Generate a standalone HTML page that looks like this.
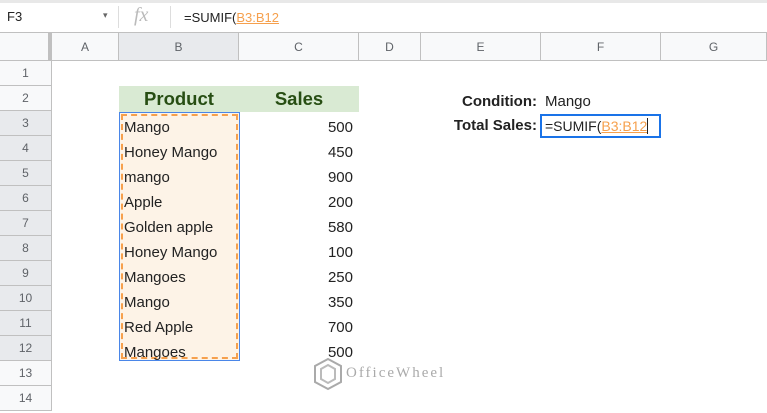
<!DOCTYPE html>
<html><head><style>
body{margin:0;width:767px;height:413px;overflow:hidden;background:#fff;font-family:"Liberation Sans",Arial,sans-serif;position:relative}
.a{position:absolute}
.ch{position:absolute;top:33px;height:28px;border-right:1px solid #c0c0c0;border-bottom:1px solid #c0c0c0;background:#f8f9fa;color:#5f6368;font-size:12px;text-align:center;line-height:28px;box-sizing:border-box}
.rh{position:absolute;left:0;width:52px;height:25px;border-right:1px solid #c0c0c0;border-bottom:1px solid #c0c0c0;background:#f8f9fa;color:#5f6368;font-size:12px;text-align:center;line-height:25px;box-sizing:border-box}
.t{position:absolute;font-size:15px;color:#222;line-height:25px}
</style></head><body>
<div class="a" style="left:0;top:0;width:767px;height:33px;border-bottom:1px solid #c0c0c0;box-sizing:border-box;border-top:3px solid #e8e8e8"></div>
<div class="a" style="left:7px;top:9px;font-size:13px;color:#222">F3</div>
<div class="a" style="left:103px;top:10px;font-size:9px;color:#666">▾</div>
<div class="a" style="left:118px;top:6px;width:1px;height:22px;background:#ddd"></div>
<div class="a" style="left:134px;top:4px;font-size:20px;color:#bbb;font-style:italic;font-family:'Liberation Serif',serif">fx</div>
<div class="a" style="left:170px;top:6px;width:1px;height:22px;background:#ddd"></div>
<div class="a" style="left:184px;top:10px;font-size:13px;color:#222">=SUMIF(<span style="color:#f6a04d;text-decoration:underline">B3:B12</span></div>
<div class="ch" style="left:0;width:52px;border-right:4px solid #c0c0c0"></div>
<div class="ch" style="left:52px;width:67px">A</div>
<div class="ch" style="left:119px;width:120px;background:#e8eaed">B</div>
<div class="ch" style="left:239px;width:120px">C</div>
<div class="ch" style="left:359px;width:62px">D</div>
<div class="ch" style="left:421px;width:120px">E</div>
<div class="ch" style="left:541px;width:120px">F</div>
<div class="ch" style="left:661px;width:106px">G</div>
<div class="rh" style="top:61px">1</div><div class="rh" style="top:86px">2</div>
<div class="rh" style="top:111px;background:#e8eaed">3</div><div class="rh" style="top:136px;background:#e8eaed">4</div>
<div class="rh" style="top:161px;background:#e8eaed">5</div><div class="rh" style="top:186px;background:#e8eaed">6</div>
<div class="rh" style="top:211px;background:#e8eaed">7</div><div class="rh" style="top:236px;background:#e8eaed">8</div>
<div class="rh" style="top:261px;background:#e8eaed">9</div><div class="rh" style="top:286px;background:#e8eaed">10</div>
<div class="rh" style="top:311px;background:#e8eaed">11</div><div class="rh" style="top:336px;background:#e8eaed">12</div>
<div class="rh" style="top:361px">13</div><div class="rh" style="top:386px">14</div>
<div class="a" style="left:119px;top:86px;width:240px;height:26px;background:#d9ead3"></div>
<div class="a" style="left:119px;top:86px;width:120px;text-align:center;font-weight:bold;font-size:18.5px;color:#274e13;line-height:26px">Product</div>
<div class="a" style="left:239px;top:86px;width:120px;text-align:center;font-weight:bold;font-size:18.5px;color:#274e13;line-height:26px">Sales</div>
<div class="a" style="left:119px;top:112px;width:121px;height:249px;background:#fdf3e7;border:1px solid #4a86e8;box-sizing:border-box"></div>
<div class="a" style="left:121px;top:114px;width:117px;height:245px;border:2px dashed #f6a04d;box-sizing:border-box"></div>
<div class="t" style="left:124px;top:115px">Mango<br>Honey Mango<br>mango<br>Apple<br>Golden apple<br>Honey Mango<br>Mangoes<br>Mango<br>Red Apple<br>Mangoes</div>
<div class="t" style="left:300px;width:53px;text-align:right;top:115px">500<br>450<br>900<br>200<br>580<br>100<br>250<br>350<br>700<br>500</div>
<div class="t" style="left:421px;width:116px;text-align:right;top:89px;font-weight:bold">Condition:</div>
<div class="t" style="left:545px;top:89px">Mango</div>
<div class="t" style="left:421px;width:116px;text-align:right;top:113px;font-weight:bold">Total Sales:</div>
<div class="a" style="left:540px;top:114px;width:121px;height:24px;border:2px solid #1a73e8;box-sizing:border-box;background:#fff;font-size:14px;line-height:20px;padding-left:3px;color:#222">=SUMIF(<span style="color:#f6a04d;text-decoration:underline">B3:B12</span><span style="border-left:1px solid #222"></span></div>
<svg class="a" style="left:313px;top:357px" width="30" height="34" viewBox="0 0 30 34"><path d="M15 2L28 9V25L15 32L2 25V9Z" fill="none" stroke="#aaa" stroke-width="2"/><path d="M15 8L22 12V22L15 26L8 22V12Z" fill="none" stroke="#bbb" stroke-width="2"/></svg>
<div class="a" style="left:346px;top:365px;font-family:'Liberation Serif',serif;font-size:15px;letter-spacing:2px;color:#aaa">OfficeWheel</div>
</body></html>
